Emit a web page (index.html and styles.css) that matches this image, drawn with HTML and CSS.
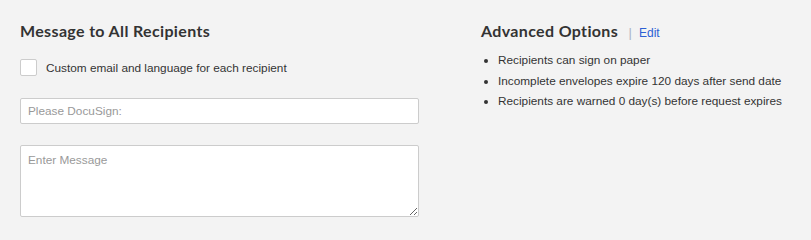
FILE: index.html
```html
<!DOCTYPE html>
<html>
<head>
<meta charset="utf-8">
<link rel="stylesheet" href="styles.css">
</head>
<body>
<div class="page">
  <section class="col-left">
    <h2 class="heading">Message to All Recipients</h2>
    <label class="check-row">
      <span class="checkbox"></span>
      <span class="check-label">Custom email and language for each recipient</span>
    </label>
    <input class="subject" type="text" placeholder="Please DocuSign:">
    <textarea class="message" placeholder="Enter Message"></textarea>
  </section>
  <section class="col-right">
    <h2 class="heading">Advanced Options <span class="sep">|</span> <a class="edit" href="#">Edit</a></h2>
    <ul class="options">
      <li>Recipients can sign on paper</li>
      <li>Incomplete envelopes expire 120 days after send date</li>
      <li>Recipients are warned 0 day(s) before request expires</li>
    </ul>
  </section>
</div>
</body>
</html>
```

FILE: styles.css
```css
html, body {
  margin: 0;
  padding: 0;
  background: #f3f3f3;
}
body {
  font-family: "Liberation Sans", Arial, sans-serif;
  font-size: 11.8px;
  color: #333;
}
.page {
  display: flex;
  gap: 62px;
  padding: 20px 20px 0 20px;
}
.col-left {
  width: 399px;
  display: flex;
  flex-direction: column;
}
.col-right {
  flex: 1;
}
.heading {
  margin: 0;
  font-family: Lato, sans-serif;
  font-weight: bold;
  font-size: 16px;
  line-height: 22px;
  color: #333;
  letter-spacing: 0.35px;
}
.sep {
  font-family: "Liberation Sans", Arial, sans-serif;
  font-weight: normal;
  font-size: 13px;
  color: #aab4c4;
  margin: 0 3px 0 6px;
  letter-spacing: 0;
}
.edit {
  font-family: "Liberation Sans", Arial, sans-serif;
  font-weight: normal;
  font-size: 12px;
  color: #2c5fd4;
  text-decoration: none;
  letter-spacing: 0;
}
.check-row {
  display: flex;
  align-items: center;
  gap: 9px;
  margin-top: 17px;
}
.checkbox {
  width: 15px;
  height: 15px;
  border: 1px solid #ccc;
  border-radius: 2px;
  background: #fff;
}
.check-label {
  color: #333;
}
.subject, .message {
  box-sizing: border-box;
  width: 399px;
  border: 1px solid #ccc;
  border-radius: 2px;
  background: #fff;
  font-family: "Liberation Sans", Arial, sans-serif;
  font-size: 11.8px;
  color: #333;
  padding: 0 7px;
  margin: 0;
  outline: none;
}
.subject {
  height: 26px;
  margin-top: 22px;
}
.message {
  height: 72px;
  margin-top: 21px;
  padding-top: 7px;
  resize: vertical;
}
.subject::placeholder, .message::placeholder {
  color: #999;
}
.options {
  margin: 6px 0 0 0;
  padding: 0 0 0 17px;
  line-height: 20.5px;
}
.options li {
  padding-left: 0;
}
```
